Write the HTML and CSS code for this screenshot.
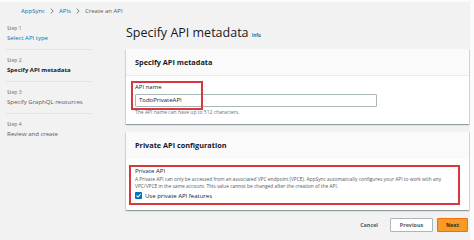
FILE: index.html
```html
<!DOCTYPE html>
<html>
<head>
<meta charset="utf-8">
<link rel="stylesheet" href="styles.css">
</head>
<body>
<div class="page">
  <div class="breadcrumb">
    <a class="crumb-link">AppSync</a>
    <svg class="chev" width="4" height="6" viewBox="0 0 4 6"><path d="M0.8 0.6 L3.2 3 L0.8 5.4" fill="none" stroke="#687078" stroke-width="0.9"/></svg>
    <a class="crumb-link">APIs</a>
    <svg class="chev" width="4" height="6" viewBox="0 0 4 6"><path d="M0.8 0.6 L3.2 3 L0.8 5.4" fill="none" stroke="#687078" stroke-width="0.9"/></svg>
    <span class="crumb-current">Create an API</span>
  </div>
  <div class="layout">
    <nav class="nav">
      <div class="step">
        <div class="step-num">Step 1</div>
        <div class="step-title link">Select API type</div>
      </div>
      <div class="step">
        <div class="step-num">Step 2</div>
        <div class="step-title active">Specify API metadata</div>
      </div>
      <div class="step">
        <div class="step-num">Step 3</div>
        <div class="step-title">Specify GraphQL resources</div>
      </div>
      <div class="step last">
        <div class="step-num">Step 4</div>
        <div class="step-title">Review and create</div>
      </div>
    </nav>
    <main class="main">
      <h1 class="title">Specify API metadata <span class="info">Info</span></h1>
      <section class="panel">
        <div class="panel-header">Specify API metadata</div>
        <div class="panel-body">
          <div class="label">API name</div>
          <div class="input">TodoPrivateAPI</div>
          <div class="help">The API name can have up to 512 characters.</div>
        </div>
        <div class="annot annot-name"></div>
      </section>
      <section class="panel panel2">
        <div class="panel-header">Private API configuration</div>
        <div class="redbox">
          <div class="label">Private API</div>
          <div class="desc">A Private API can only be accessed from an associated VPC endpoint (VPCE). AppSync automatically configures your API to work with any VPC/VPCE in the same account. This value cannot be changed after the creation of the API.</div>
          <label class="check-row">
            <span class="checkbox"><svg width="7" height="7" viewBox="0 0 7 7"><path d="M1.5 3.6 L3 5 L5.6 2" fill="none" stroke="#fff" stroke-width="1.1"/></svg></span>
            <span>Use private API features</span>
          </label>
        </div>
      </section>
      <div class="actions">
        <span class="btn-link">Cancel</span>
        <span class="btn btn-secondary">Previous</span>
        <span class="btn btn-primary">Next</span>
      </div>
    </main>
  </div>
</div>
</body>
</html>
```
FILE: styles.css
```css
* { box-sizing: border-box; }
html, body { margin: 0; padding: 0; background: #fbfbfb; }
body { font-family: "Open Sans", "Noto Sans", sans-serif; color: #16191f; }
.page {
  width: 470px;
  height: 238px;
  margin-top: 2px;
  background: #f2f2f2;
  overflow: hidden;
}
.breadcrumb {
  height: 16px;
  padding-left: 21px;
  display: flex;
  align-items: center;
  gap: 5px;
  font-size: 6px;
  padding-top: 1px;
}
.crumb-link { color: #0073bb; }
.crumb-current { color: #545b64; }
.chev { display: block; }
.layout { display: flex; }
.nav {
  width: 86px;
  margin-left: 6px;
  padding-top: 5px;
  flex: none;
}
.step {
  border-bottom: 1px solid #e0e2e3;
  padding-bottom: 6px;
  margin-bottom: 5px;
  padding-left: 1px;
}
.step.last { border-bottom: none; }
.step-num { font-size: 5px; line-height: 10px; color: #687078; }
.step-title { font-size: 6px; line-height: 10px; color: #545b64; white-space: nowrap; }
.step-title.link { color: #0073bb; }
.step-title.active { color: #16191f; font-weight: 700; }
.main {
  margin-left: 34px;
  width: 343px;
  flex: none;
}
.title {
  margin: 0 0 6px 0;
  font-size: 12.5px;
  font-weight: 400;
  line-height: 20px;
  padding-top: 5px;
  box-sizing: content-box;
  height: 20px;
  color: #16191f;
}
.info { font-size: 4.5px; color: #0073bb; font-weight: 700; vertical-align: baseline; }
.panel {
  position: relative;
  background: #fff;
  box-shadow: 0 1px 1px 0 rgba(0,28,36,.25), 1px 1px 1px 0 rgba(0,28,36,.1), -1px 1px 1px 0 rgba(0,28,36,.1);
}
.panel-header {
  height: 27px;
  line-height: 27px;
  padding-left: 9px;
  font-size: 7.3px;
  font-weight: 700;
  background: #fafafa;
  border-bottom: 1px solid #eaeded;
}
.panel-body { padding: 6px 9px 8px 9px; }
.label { font-size: 6px; line-height: 10px; color: #16191f; }
.input {
  margin-top: 2px;
  width: 242px;
  height: 13px;
  border: 1px solid #aab7b8;
  border-radius: 1px;
  font-size: 6px;
  line-height: 11px;
  padding-left: 3px;
  background: #fff;
}
.help { font-size: 5px; line-height: 8px; color: #687078; margin-top: 1px; }
.annot {
  position: absolute;
  border: 2px solid #d9363e;
}
.annot-name { left: 5px; top: 32px; width: 72px; height: 29px; }
.panel2 { margin-top: 8px; padding-bottom: 5px; }
.panel2 .panel-header { border-bottom: none; }
.redbox {
  margin: 6px 9px 0 3px;
  border: 2px solid #d9363e;
  padding: 0 4px 2px 4px;
}
.redbox .label { line-height: 9px; }
.desc { font-size: 4.85px; line-height: 7px; color: #545b64; }
.check-row {
  display: flex;
  align-items: center;
  gap: 3px;
  height: 11px;
  font-size: 6px;
  color: #16191f;
}
.checkbox {
  width: 7px;
  height: 7px;
  background: #0073bb;
  border-radius: 1px;
  display: flex;
}
.actions {
  display: flex;
  justify-content: flex-end;
  align-items: center;
  margin-top: 8px;
  margin-right: 1px;
  height: 14px;
}
.btn-link { font-size: 5.4px; font-weight: 700; color: #545b64; margin-right: 12px; }
.btn {
  height: 14px;
  font-size: 5.4px;
  font-weight: 700;
  display: flex;
  align-items: center;
  justify-content: center;
  border-radius: 1px;
}
.btn-secondary { width: 43px; border: 1px solid #aab7b8; background: #fff; color: #545b64; margin-right: 4px; }
.btn-primary { width: 31px; background: #f89a27; color: #3b2a12; border: 1px solid #ec7211; }
```
